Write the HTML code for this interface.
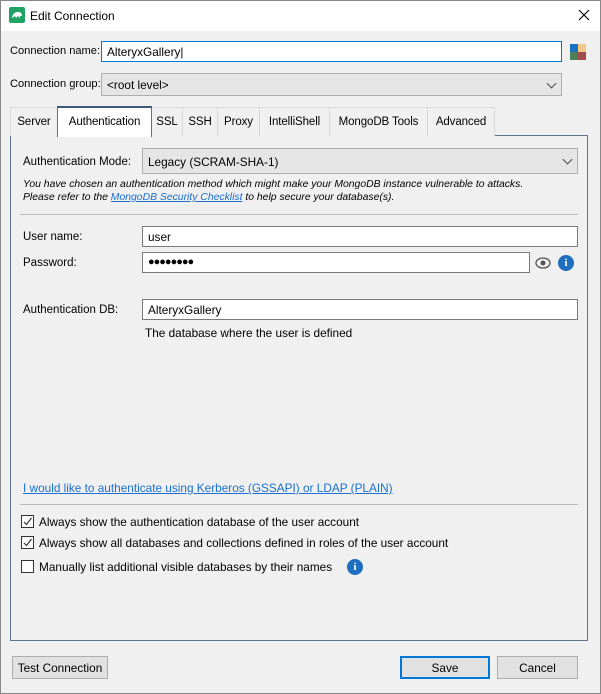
<!DOCTYPE html>
<html><head><style>
*{box-sizing:border-box;margin:0;padding:0}
body{width:601px;height:694px;background:#f0f0f0;font-family:"Liberation Sans",sans-serif;font-size:11.8px;color:#000;position:relative;overflow:hidden}
.a{position:absolute;white-space:nowrap}
.l{font-size:11.5px}
.in{position:absolute;background:#fff;border:1px solid #7a7a7a;padding:3px 5px;font-size:11.8px}
.cb{position:absolute;background:#e5e5e5;border:1px solid #adadad;padding:4px 5px}
.chev{position:absolute;right:6px;top:50%;width:7px;height:7px;border-right:1px solid #444;border-bottom:1px solid #444;transform:translateY(-70%) rotate(45deg)}
.tab{position:absolute;top:107px;height:29px;border:1px solid #d9d9d9;border-bottom:none;padding:8px 0 0;text-align:center;background:#f0f0f0;font-size:11.5px;letter-spacing:-0.1px}
.btn{position:absolute;background:#e1e1e1;border:1px solid #adadad;text-align:center;padding-top:4px;height:23px}
.chk{position:absolute;left:21px;width:13px;height:13px;border:1px solid #333;background:#fff}
.info{position:absolute;width:16px;height:16px;border-radius:50%;background:#1e6fc0;color:#fff;font-weight:bold;font-size:11px;text-align:center;line-height:16px;font-family:"Liberation Serif",serif}
</style></head><body>
<div class="a" style="left:0;top:0;width:601px;height:31px;background:#fff"></div>
<div class="a" style="left:0;top:0;width:601px;height:694px;border:1px solid #888"></div>
<div class="a" style="left:9px;top:7px;width:16px;height:16px;background:#21a366;border-radius:2px"><svg width="16" height="16"><path d="M3 11 Q4 5 9 5 Q13 5 13 9 L11 9 L11 11 L9 9 L7 11 L6 9 Z" fill="#fff"/></svg></div>
<div class="a" style="left:30px;top:9px;font-size:12px">Edit Connection</div>
<svg class="a" style="left:578px;top:9px" width="12" height="12"><path d="M1 1L11 11M11 1L1 11" stroke="#000" stroke-width="1.1"/></svg>

<div class="a" style="left:10px;top:45px;font-size:11.1px">Connection name:</div>
<div class="in" style="left:101px;top:41px;width:461px;height:21px;border-color:#0078d7">AlteryxGallery|</div>
<div class="a" style="left:570px;top:44px;width:16px;height:16px">
<div class="a" style="left:0;top:0;width:8px;height:8px;background:#1d70c0"></div><div class="a" style="left:8px;top:0;width:8px;height:8px;background:#f3c98b"></div>
<div class="a" style="left:0;top:8px;width:8px;height:8px;background:#4e7e5a"></div><div class="a" style="left:8px;top:8px;width:8px;height:8px;background:#a14d4d"></div></div>

<div class="a" style="left:10px;top:78px;font-size:11.1px">Connection group:</div>
<div class="cb" style="left:101px;top:73px;width:461px;height:23px">&lt;root level&gt;<div class="chev"></div></div>

<div class="a" style="left:10px;top:135px;width:578px;height:506px;border:1px solid #5a7390"></div>
<div class="tab" style="left:10px;width:48px">Server</div>
<div class="tab" style="left:151px;width:32px">SSL</div>
<div class="tab" style="left:182px;width:36px">SSH</div>
<div class="tab" style="left:217px;width:43px">Proxy</div>
<div class="tab" style="left:259px;width:71px">IntelliShell</div>
<div class="tab" style="left:329px;width:99px">MongoDB Tools</div>
<div class="tab" style="left:427px;width:68px">Advanced</div>
<div class="tab" style="left:57px;width:95px;top:106px;height:31px;background:#fff;border:1px solid #5a7390;border-top:2px solid #3c5a7a;border-bottom:none;padding-top:8px">Authentication</div>

<div class="a l" style="left:23px;top:156px">Authentication Mode:</div>
<div class="cb" style="left:142px;top:148px;width:436px;height:26px;padding-top:6px">Legacy (SCRAM-SHA-1)<div class="chev"></div></div>
<div class="a" style="left:23px;top:179px;font-style:italic;font-size:10.4px">You have chosen an authentication method which might make your MongoDB instance vulnerable to attacks.</div>
<div class="a" style="left:23px;top:192px;font-style:italic;font-size:10.4px">Please refer to the <span style="color:#1a6fd0;text-decoration:underline">MongoDB Security Checklist</span> to help secure your database(s).</div>
<div class="a" style="left:20px;top:214px;width:558px;height:1px;background:#bbb"></div>

<div class="a l" style="left:23px;top:231px">User name:</div>
<div class="in" style="left:142px;top:226px;width:436px;height:21px">user</div>
<div class="a l" style="left:23px;top:257px">Password:</div>
<div class="in" style="left:142px;top:252px;width:388px;height:21px;letter-spacing:-1px;font-size:11px;padding-top:3px">●●●●●●●●</div>
<svg class="a" style="left:535px;top:256px" width="16" height="14"><ellipse cx="8" cy="7" rx="7" ry="5" fill="none" stroke="#555" stroke-width="1.3"/><circle cx="8" cy="7" r="2.5" fill="#555"/></svg>
<div class="info" style="left:558px;top:255px">i</div>

<div class="a l" style="left:23px;top:304px">Authentication DB:</div>
<div class="in" style="left:142px;top:299px;width:436px;height:21px">AlteryxGallery</div>
<div class="a" style="left:145px;top:326px">The database where the user is defined</div>

<div class="a" style="left:23px;top:481px;color:#1a6fd0;text-decoration:underline">I would like to authenticate using Kerberos (GSSAPI) or LDAP (PLAIN)</div>
<div class="a" style="left:20px;top:504px;width:558px;height:1px;background:#bbb"></div>
<div class="chk" style="top:515px"><svg width="11" height="11"><path d="M2 6L4.5 8.5L9.5 2" stroke="#333" fill="none" stroke-width="1.2"/></svg></div>
<div class="a" style="left:39px;top:515px">Always show the authentication database of the user account</div>
<div class="chk" style="top:536px"><svg width="11" height="11"><path d="M2 6L4.5 8.5L9.5 2" stroke="#333" fill="none" stroke-width="1.2"/></svg></div>
<div class="a" style="left:39px;top:536px">Always show all databases and collections defined in roles of the user account</div>
<div class="chk" style="top:560px"></div>
<div class="a" style="left:39px;top:560px">Manually list additional visible databases by their names</div>
<div class="info" style="left:347px;top:559px">i</div>

<div class="btn" style="left:12px;top:656px;width:96px">Test Connection</div>
<div class="btn" style="left:400px;top:656px;width:90px;border:2px solid #0078d7;padding-top:3px">Save</div>
<div class="btn" style="left:497px;top:656px;width:81px">Cancel</div>
</body></html>
